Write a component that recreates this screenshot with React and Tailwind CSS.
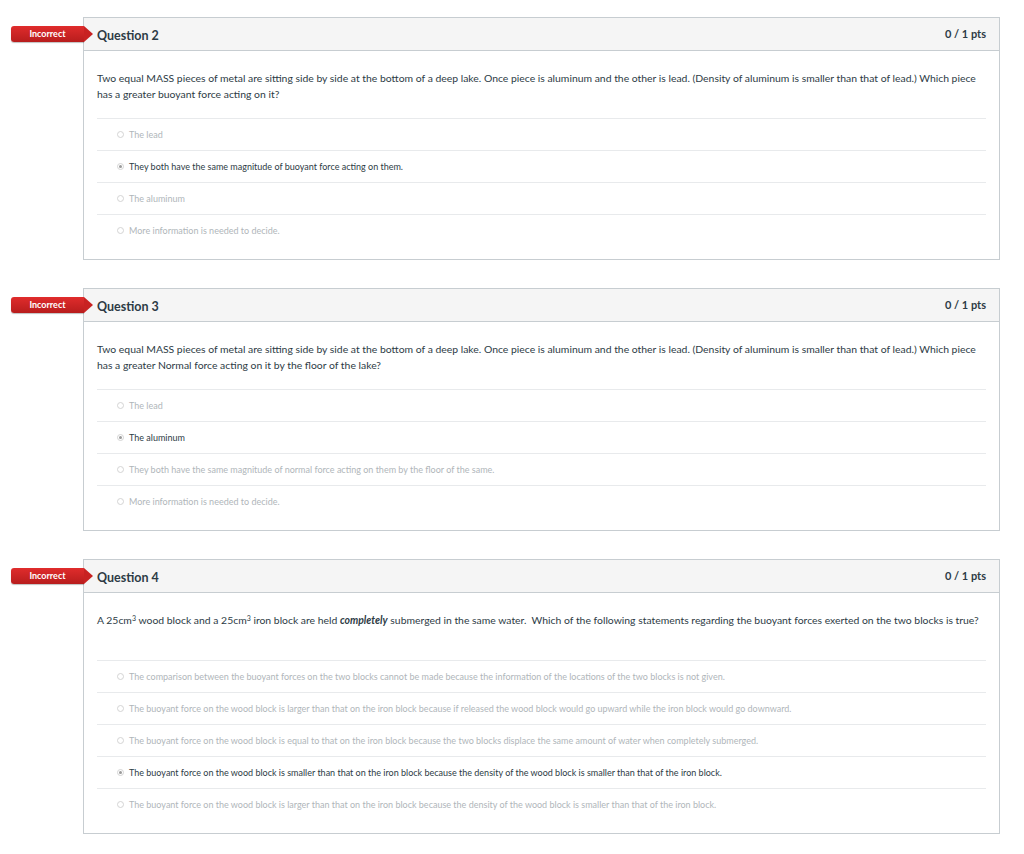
import React from 'react';

const Sup = () => <sup className="text-[7px] leading-none relative -top-[3px]">3</sup>;

const questions = [
  {
    id: 2,
    text: (
      <>Two equal MASS pieces of metal are sitting side by side at the bottom of a deep lake. Once piece is aluminum and the other is lead. (Density of aluminum is smaller than that of lead.) Which piece has a greater buoyant force acting on it?</>
    ),
    answers: [
      'The lead',
      'They both have the same magnitude of buoyant force acting on them.',
      'The aluminum',
      'More information is needed to decide.',
    ],
    selected: 1,
  },
  {
    id: 3,
    text: (
      <>Two equal MASS pieces of metal are sitting side by side at the bottom of a deep lake. Once piece is aluminum and the other is lead. (Density of aluminum is smaller than that of lead.) Which piece has a greater Normal force acting on it by the floor of the lake?</>
    ),
    answers: [
      'The lead',
      'The aluminum',
      'They both have the same magnitude of normal force acting on them by the floor of the same.',
      'More information is needed to decide.',
    ],
    selected: 1,
  },
  {
    id: 4,
    text: (
      <>
        A 25cm<Sup /> wood block and a 25cm<Sup /> iron block are held <strong className="italic font-bold">completely</strong> submerged in the same water.&nbsp; Which of the following statements regarding the buoyant forces exerted on the two blocks is true?
      </>
    ),
    extraGap: true,
    answers: [
      'The comparison between the buoyant forces on the two blocks cannot be made because the information of the locations of the two blocks is not given.',
      'The buoyant force on the wood block is larger than that on the iron block because if released the wood block would go upward while the iron block would go downward.',
      'The buoyant force on the wood block is equal to that on the iron block because the two blocks displace the same amount of water when completely submerged.',
      'The buoyant force on the wood block is smaller than that on the iron block because the density of the wood block is smaller than that of the iron block.',
      'The buoyant force on the wood block is larger than that on the iron block because the density of the wood block is smaller than that of the iron block.',
    ],
    selected: 3,
  },
];

const IncorrectBadge = () => (
  <div className="absolute left-[-73px] top-[8px] flex items-center">
    <div className="h-[16px] w-[73px] bg-gradient-to-b from-[#e02c2c] to-[#b81d1d] rounded-l-[3px] flex items-center justify-center text-white text-[9px] font-bold shadow-[0_1px_1px_rgba(0,0,0,0.25)]">
      Incorrect
    </div>
    <div className="w-0 h-0 border-t-[8px] border-b-[8px] border-l-[9px] border-t-transparent border-b-transparent border-l-[#c82222]" />
  </div>
);

const Radio = ({ checked }) => (
  <span className="w-[7px] h-[7px] rounded-full border border-[#d4d4d4] bg-white flex items-center justify-center flex-shrink-0">
    {checked && <span className="w-[3px] h-[3px] rounded-full bg-[#9a9a9a]" />}
  </span>
);

const QuestionCard = ({ q }) => (
  <div className="relative border border-[#c7cdd1] bg-white mb-[28px]">
    <IncorrectBadge />
    <div className="h-[33px] bg-[#f5f5f5] border-b border-[#c7cdd1] flex items-start justify-between px-[13px]">
      <h2 className="text-[12.5px] font-bold text-[#2d3b45] pt-[10px] leading-4">Question {q.id}</h2>
      <span className="text-[11px] font-bold text-[#2d3b45] pt-[8px] leading-4">0 / 1 pts</span>
    </div>
    <div className="px-[13px] pt-[19px] pb-[13px]">
      <p className="text-[10.4px] leading-4 text-[#2d3b45]">{q.text}</p>
      <div className={q.extraGap ? 'mt-[32px]' : 'mt-[16px]'}>
        {q.answers.map((a, i) => {
          const isSel = i === q.selected;
          return (
            <div key={i} className="h-[32px] border-t border-[#e8eaec] flex items-center gap-[5px] pl-[20px]">
              <Radio checked={isSel} />
              <span className={`text-[9px] ${isSel ? 'text-[#2d3b45]' : 'text-[#b0b6ba]'}`}>{a}</span>
            </div>
          );
        })}
      </div>
    </div>
  </div>
);

export default function App() {
  return (
    <div className="min-h-screen bg-white pt-[17px] pl-[83px] pr-[24px] font-['Lato','Liberation_Sans',sans-serif]">
      {questions.map((q) => (
        <QuestionCard key={q.id} q={q} />
      ))}
    </div>
  );
}
